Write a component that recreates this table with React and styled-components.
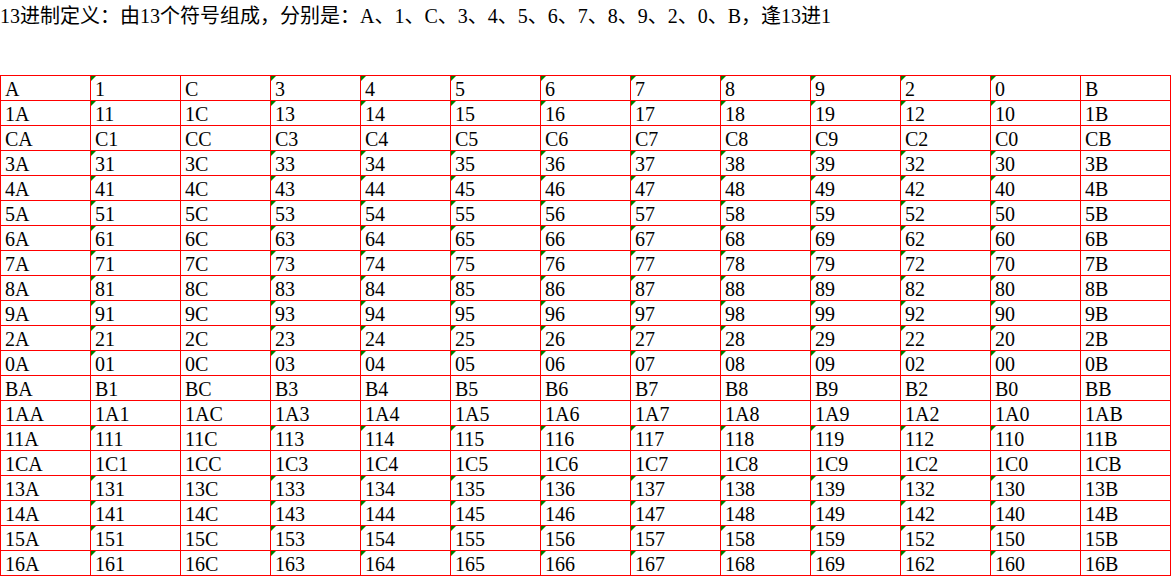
import React from "react";
import styled, { createGlobalStyle } from "styled-components";

const GlobalStyle = createGlobalStyle`
  html,body{margin:0;padding:0;background:#fff;}
  body{
    font-family:"Liberation Serif","Noto Sans CJK SC",serif;
    color:#000;
  }
`;

const Page = styled.div`
  width:1172px;
  display:flex;
  flex-direction:column;
`;

const Title = styled.p`
  margin:0 0 45px 0;
  padding-top:2px;
  height:28px;
  line-height:28px;
  font-size:20px;
  white-space:nowrap;
`;

const Sheet = styled.div`
  display:grid;
  grid-template-columns:repeat(13, 89px);
  grid-auto-rows:24px;
  gap:1px;
  padding:1px;
  width:max-content;
  background-color:#ff0000;
`;

const Cell = styled.div`
  position:relative;
  background-color:#fff;
  padding:2px 0 0 4px;
  font-size:20px;
  line-height:22px;
  white-space:nowrap;
  overflow:hidden;
`;

// excel "number stored as text" marker
const Flag = styled.span`
  position:absolute;
  top:0;left:0;
  width:0;height:0;
  border-top:5px solid #008000;
  border-right:5px solid transparent;
`;

const SYMBOLS = ["A","1","C","3","4","5","6","7","8","9","2","0","B"];

const toBase13 = (n)=>{
  if(n===0) return "";
  let out = "";
  while(n>0){
    out = SYMBOLS[n%13] + out;
    n = Math.floor(n/13);
  }
  return out;
};

const rows = Array.from({length:20},(_,r)=>{
  const prefix = toBase13(r);
  return SYMBOLS.map((s)=>prefix + s);
});

const App = ()=>{
  return (
    <Page>
      <GlobalStyle/>
      <Title>13进制定义：由13个符号组成，分别是：A、1、C、3、4、5、6、7、8、9、2、0、B，逢13进1</Title>
      <Sheet>
        {rows.map((row,i)=>row.map((text,j)=>(
          <Cell key={i+"-"+j}>
            {/^\d+$/.test(text) && <Flag/>}
            {text}
          </Cell>
        )))}
      </Sheet>
    </Page>
  );
};

export default App;
